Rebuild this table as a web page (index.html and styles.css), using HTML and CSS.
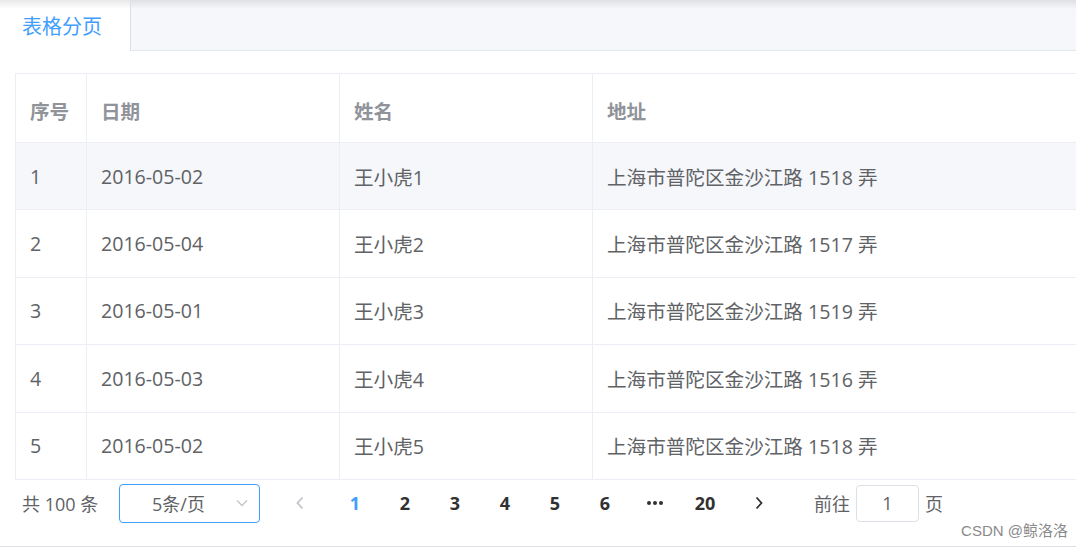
FILE: index.html
```html
<!DOCTYPE html>
<html lang="zh">
<head>
<meta charset="utf-8">
<title>表格分页</title>
<link rel="stylesheet" href="styles.css">
</head>
<body>
<div class="card">
  <div class="tabs-header">
    <div class="tab active">表格分页</div>
    <div class="tab-rest"></div>
  </div>
  <div class="tab-content">
    <table class="grid">
      <colgroup>
        <col class="c-idx"><col class="c-date"><col class="c-name"><col class="c-addr">
      </colgroup>
      <thead>
        <tr><th>序号</th><th>日期</th><th>姓名</th><th>地址</th></tr>
      </thead>
      <tbody>
        <tr class="hover"><td>1</td><td>2016-05-02</td><td>王小虎1</td><td>上海市普陀区金沙江路 1518 弄</td></tr>
        <tr><td>2</td><td>2016-05-04</td><td>王小虎2</td><td>上海市普陀区金沙江路 1517 弄</td></tr>
        <tr><td>3</td><td>2016-05-01</td><td>王小虎3</td><td>上海市普陀区金沙江路 1519 弄</td></tr>
        <tr><td>4</td><td>2016-05-03</td><td>王小虎4</td><td>上海市普陀区金沙江路 1516 弄</td></tr>
        <tr><td>5</td><td>2016-05-02</td><td>王小虎5</td><td>上海市普陀区金沙江路 1518 弄</td></tr>
      </tbody>
    </table>
    <div class="pager">
      <span class="total">共 100 条</span>
      <div class="sizes">
        <span class="sizes-text">5条/页</span>
        <svg class="caret" width="14" height="14" viewBox="0 0 14 14"><path d="M2 4.5 L7 9.5 L12 4.5" fill="none" stroke="#c0c4cc" stroke-width="1.3"/></svg>
      </div>
      <button class="nav prev"><svg width="12" height="16" viewBox="0 0 12 16"><path d="M8.5 2.5 L3.5 8 L8.5 13.5" fill="none" stroke="#c0c4cc" stroke-width="1.8"/></svg></button>
      <ul class="pages">
        <li class="on">1</li><li>2</li><li>3</li><li>4</li><li>5</li><li>6</li>
        <li class="more"><svg width="18" height="6" viewBox="0 0 18 6"><circle cx="3" cy="3" r="2" fill="#303133"/><circle cx="9" cy="3" r="2" fill="#303133"/><circle cx="15" cy="3" r="2" fill="#303133"/></svg></li>
        <li>20</li>
      </ul>
      <button class="nav next"><svg width="12" height="16" viewBox="0 0 12 16"><path d="M3.5 2.5 L8.5 8 L3.5 13.5" fill="none" stroke="#303133" stroke-width="1.8"/></svg></button>
      <span class="jump">前往<span class="jump-box">1</span>页</span>
    </div>
    <div class="watermark">CSDN @鲸洛洛</div>
  </div>
</div>
</body>
</html>
```

FILE: styles.css
```css
html, body {
  margin: 0;
  padding: 0;
  background: #fff;
  overflow: hidden;
}
body {
  width: 1076px;
  height: 548px;
  font-family: "Open Sans", "Noto Sans CJK SC", sans-serif;
  color: #606266;
}
.card {
  position: relative;
  height: 546px;
  border-bottom: 1px solid #dcdfe6;
  box-sizing: content-box;
}
.tabs-header {
  display: flex;
  height: 51px;
}
.tab {
  width: 130px;
  box-sizing: border-box;
  padding-left: 22px;
  display: flex;
  align-items: center;
  font-size: 20px;
  color: #409eff;
  background: linear-gradient(rgba(0,0,0,0.09), rgba(0,0,0,0) 9px), #fff;
}
.tab-rest {
  flex: 1;
  background: linear-gradient(rgba(0,0,0,0.09), rgba(0,0,0,0) 9px), #f5f7fa;
  border-left: 1px solid #dcdfe6;
  border-bottom: 1px solid #e4e7ed;
}
.tab-content {
  padding: 22px 0 0 15px;
}
.grid {
  width: 1100px;
  border-collapse: collapse;
  table-layout: fixed;
  font-size: 19.6px;
}
.c-idx { width: 71px; }
.c-date { width: 253px; }
.c-name { width: 253px; }
.grid th, .grid td {
  border: 1px solid #ebeef5;
  text-align: left;
  padding: 0 0 0 14px;
  white-space: nowrap;
}
.grid th {
  height: 64px;
  color: #909399;
  font-weight: 700;
  padding-top: 4px;
}
.grid td {
  height: 66.4px;
  color: #606266;
}
.grid tr.hover td {
  background: #f5f7fa;
}
.pager {
  display: flex;
  align-items: center;
  height: 47px;
  margin-left: -15px;
  font-size: 18px;
}
.total {
  margin-left: 22px;
  width: 97px;
  color: #606266;
}
.sizes {
  width: 141px;
  height: 39px;
  box-sizing: border-box;
  border: 1px solid #409eff;
  border-radius: 4px;
  display: flex;
  align-items: center;
  padding-left: 32px;
}
.sizes-text {
  flex: 1;
  color: #606266;
}
.caret {
  margin-right: 10px;
}
.nav {
  width: 50px;
  height: 39px;
  border: 0;
  background: transparent;
  display: flex;
  align-items: center;
  justify-content: center;
  padding: 0;
}
.prev { margin-left: 15px; }
.pages {
  list-style: none;
  margin: 0 0 0 5px;
  padding: 0;
  display: flex;
  align-items: center;
}
.pages li {
  width: 50px;
  text-align: center;
  font-weight: 700;
  color: #303133;
}
.pages li.on { color: #409eff; }
.pages li.more {
  display: flex;
  align-items: center;
  justify-content: center;
  height: 24px;
}
.next { margin-left: 4px; }
.jump {
  margin-left: 30px;
  display: flex;
  align-items: center;
  color: #606266;
}
.jump-box {
  width: 63px;
  height: 37px;
  box-sizing: border-box;
  border: 1px solid #dcdfe6;
  border-radius: 4px;
  margin: 0 6px;
  display: flex;
  align-items: center;
  justify-content: center;
  color: #606266;
}
.watermark {
  position: absolute;
  right: 8px;
  bottom: 6px;
  font-family: "Liberation Sans", "Noto Sans CJK SC", sans-serif;
  font-size: 15px;
  color: #8a8a8a;
}
```
